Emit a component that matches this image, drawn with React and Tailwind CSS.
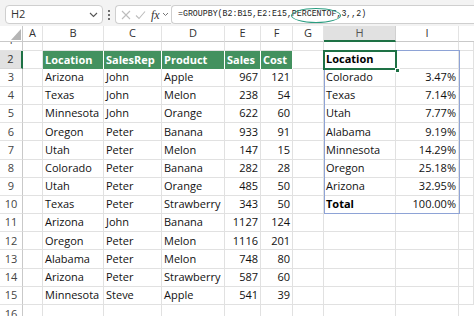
import React from "react";

const data = [
  ["Arizona", "John", "Apple", "967", "121"],
  ["Texas", "John", "Melon", "238", "54"],
  ["Minnesota", "John", "Orange", "622", "60"],
  ["Oregon", "Peter", "Banana", "933", "91"],
  ["Utah", "Peter", "Melon", "147", "15"],
  ["Colorado", "Peter", "Banana", "282", "28"],
  ["Utah", "Peter", "Orange", "485", "50"],
  ["Texas", "Peter", "Strawberry", "343", "50"],
  ["Arizona", "John", "Banana", "1127", "124"],
  ["Oregon", "Peter", "Melon", "1116", "201"],
  ["Alabama", "Peter", "Melon", "748", "80"],
  ["Arizona", "Peter", "Strawberry", "587", "60"],
  ["Minnesota", "Steve", "Apple", "541", "39"],
];

const summary = [
  ["Colorado", "3.47%"],
  ["Texas", "7.14%"],
  ["Utah", "7.77%"],
  ["Alabama", "9.19%"],
  ["Minnesota", "14.29%"],
  ["Oregon", "25.18%"],
  ["Arizona", "32.95%"],
];

function RowHead({ n, active }) {
  return (
    <div
      className={
        active
          ? "flex items-center justify-center border-b border-r-2 border-b-[#d6d6d6] border-r-[#1e7145] bg-[#e1e1e1] text-[11px] text-[#333]"
          : "flex items-center justify-center border-b border-r border-b-[#e3e3e3] border-r-[#c9c9c9] bg-white text-[11px] text-[#444]"
      }
    >
      {n}
    </div>
  );
}

function L({ children, bold }) {
  return (
    <div
      className={
        bold
          ? "flex items-center overflow-visible whitespace-nowrap border-b border-r border-[#e1e1e1] pl-[2px] text-[11px] font-bold text-black"
          : "flex items-center overflow-visible whitespace-nowrap border-b border-r border-[#e1e1e1] pl-[2px] text-[11px] text-[#111]"
      }
    >
      {children}
    </div>
  );
}

function R({ children }) {
  return (
    <div className="flex items-center justify-end whitespace-nowrap border-b border-r border-[#e1e1e1] pr-[2px] text-[11px] text-[#111]">
      {children}
    </div>
  );
}

function E() {
  return <div className="border-b border-r border-[#e1e1e1]" />;
}

function G({ children }) {
  return (
    <div className="flex items-center whitespace-nowrap border-r border-white bg-[#43915f] pl-[2px] text-[11px] font-bold text-white">
      {children}
    </div>
  );
}

function ColHead({ c, active }) {
  return (
    <div
      className={
        active
          ? "flex items-center justify-center border-b-2 border-r border-b-[#1e7145] border-r-[#d0d0d0] bg-[#e1e1e1] text-[11px] text-[#555]"
          : "flex items-center justify-center border-b border-r border-b-[#c9c9c9] border-r-[#e3e3e3] bg-white text-[11px] text-[#333]"
      }
    >
      {c}
    </div>
  );
}

export default function App() {
  return (
    <div className="h-[316px] w-[474px] overflow-hidden bg-white font-['Open_Sans','Liberation_Sans',sans-serif]">
      {/* Formula bar */}
      <div className="flex h-[26px] items-start bg-[#f3f3f3] pt-[5px]">
        <div className="ml-[5px] flex h-[19px] w-[98px] items-center justify-between rounded-[4px] border border-[#cfcfcf] bg-white pl-[5px] pr-[4px] text-[11px] text-[#333]">
          <span>H2</span>
          <svg width="9" height="6" viewBox="0 0 9 6">
            <path d="M1 1 L4.5 4.5 L8 1" fill="none" stroke="#555" strokeWidth="1.1" />
          </svg>
        </div>
        <div className="flex h-[19px] w-[12px] flex-col items-center justify-center gap-[2px]">
          <div className="h-[2px] w-[2px] rounded-full bg-[#444]" />
          <div className="h-[2px] w-[2px] rounded-full bg-[#444]" />
          <div className="h-[2px] w-[2px] rounded-full bg-[#444]" />
        </div>
        <div className="flex h-[19px] w-[56px] items-center rounded-l-[4px] border border-r-0 border-[#cfcfcf] bg-white pl-[5px]">
          <svg width="10" height="10" viewBox="0 0 10 10">
            <path d="M1 1 L9 9 M9 1 L1 9" stroke="#bdbdbd" strokeWidth="1.1" />
          </svg>
          <svg className="ml-[4px]" width="11" height="10" viewBox="0 0 11 10">
            <path d="M1 5.5 L4 8.5 L10 1.5" fill="none" stroke="#bdbdbd" strokeWidth="1.1" />
          </svg>
          <span className="ml-[5px] font-['Liberation_Serif',serif] text-[12px] italic leading-none text-[#333]">
            fx
          </span>
          <svg className="ml-[2px]" width="7" height="5" viewBox="0 0 7 5">
            <path d="M1 1 L3.5 3.5 L6 1" fill="none" stroke="#777" strokeWidth="1" />
          </svg>
        </div>
        <div className="relative flex h-[19px] flex-1 items-center rounded-l-[4px] border border-r-0 border-[#cfcfcf] bg-white pl-[6px]">
          <span className="whitespace-nowrap font-['Liberation_Mono',monospace] text-[8.25px] leading-none text-[#222]">
            =GROUPBY(B2:B15,E2:E15,PERCENTOF,3,,2)
          </span>
          <div className="absolute left-[119px] top-[2px] h-[15px] w-[50px] rounded-[50%] border-[1.5px] border-[#2a9d80]" />
        </div>
      </div>

      {/* Sheet grid */}
      <div className="relative grid h-[290px] grid-cols-[23px_20px_61px_58px_63px_36px_32px_31px_72px_63px_1fr] grid-rows-[16px_8.7px_repeat(14,18.17px)_1fr]">
        {/* header row */}
        <div className="relative border-b border-r border-b-[#c9c9c9] border-r-[#c9c9c9] bg-white">
          <svg className="absolute left-[11px] top-[3px]" width="10" height="11" viewBox="0 0 10 11">
            <path d="M10 0 L10 11 L0 11 Z" fill="#b5b5b5" />
          </svg>
        </div>
        <ColHead c="A" />
        <ColHead c="B" />
        <ColHead c="C" />
        <ColHead c="D" />
        <ColHead c="E" />
        <ColHead c="F" />
        <ColHead c="G" />
        <ColHead c="H" active />
        <ColHead c="I" />
        <div className="border-b border-b-[#c9c9c9] bg-white" />

        {/* row 1 (partially scrolled) */}
        <div className="flex items-end justify-center overflow-hidden border-b border-r border-b-[#e3e3e3] border-r-[#c9c9c9] text-[11px] text-[#444]">
          <div className="flex h-[18.17px] shrink-0 items-center">1</div>
        </div>
        <E /><E /><E /><E /><E /><E /><E /><E /><E /><E />

        {/* row 2 */}
        <RowHead n="2" active />
        <E />
        <G>Location</G>
        <G>SalesRep</G>
        <G>Product</G>
        <G>Sales</G>
        <G>Cost</G>
        <E />
        <L bold>Location</L>
        <E />
        <E />

        {data.map((r, i) => {
          const s = i < 7 ? summary[i] : i === 7 ? ["Total", "100.00%"] : null;
          return (
            <React.Fragment key={i}>
              <RowHead n={String(i + 3)} />
              <E />
              <L>{r[0]}</L>
              <L>{r[1]}</L>
              <L>{r[2]}</L>
              <R>{r[3]}</R>
              <R>{r[4]}</R>
              <E />
              {s ? <L bold={i === 7}>{s[0]}</L> : <E />}
              {s ? <R>{s[1]}</R> : <E />}
              <E />
            </React.Fragment>
          );
        })}

        {/* row 16 */}
        <div className="flex items-start justify-center overflow-hidden border-r border-r-[#c9c9c9] text-[11px] text-[#444]">
          <div className="flex h-[18.17px] shrink-0 items-center">16</div>
        </div>
        <div className="border-r border-[#e1e1e1]" />
        <div className="border-r border-[#e1e1e1]" />
        <div className="border-r border-[#e1e1e1]" />
        <div className="border-r border-[#e1e1e1]" />
        <div className="border-r border-[#e1e1e1]" />
        <div className="border-r border-[#e1e1e1]" />
        <div className="border-r border-[#e1e1e1]" />
        <div className="border-r border-[#e1e1e1]" />
        <div className="border-r border-[#e1e1e1]" />
        <div />

        {/* spill range border */}
        <div className="pointer-events-none absolute left-[323.5px] top-[24.2px] h-[164px] w-[136px] border border-[#8ea3d6]" />
        {/* active cell */}
        <div className="pointer-events-none absolute left-[323px] top-[23.7px] h-[20.2px] w-[74px] border-2 border-[#1e7145]" />
        <div className="pointer-events-none absolute left-[394.5px] top-[41.5px] h-[5px] w-[5px] border border-white bg-[#1e7145]" />
      </div>
    </div>
  );
}
